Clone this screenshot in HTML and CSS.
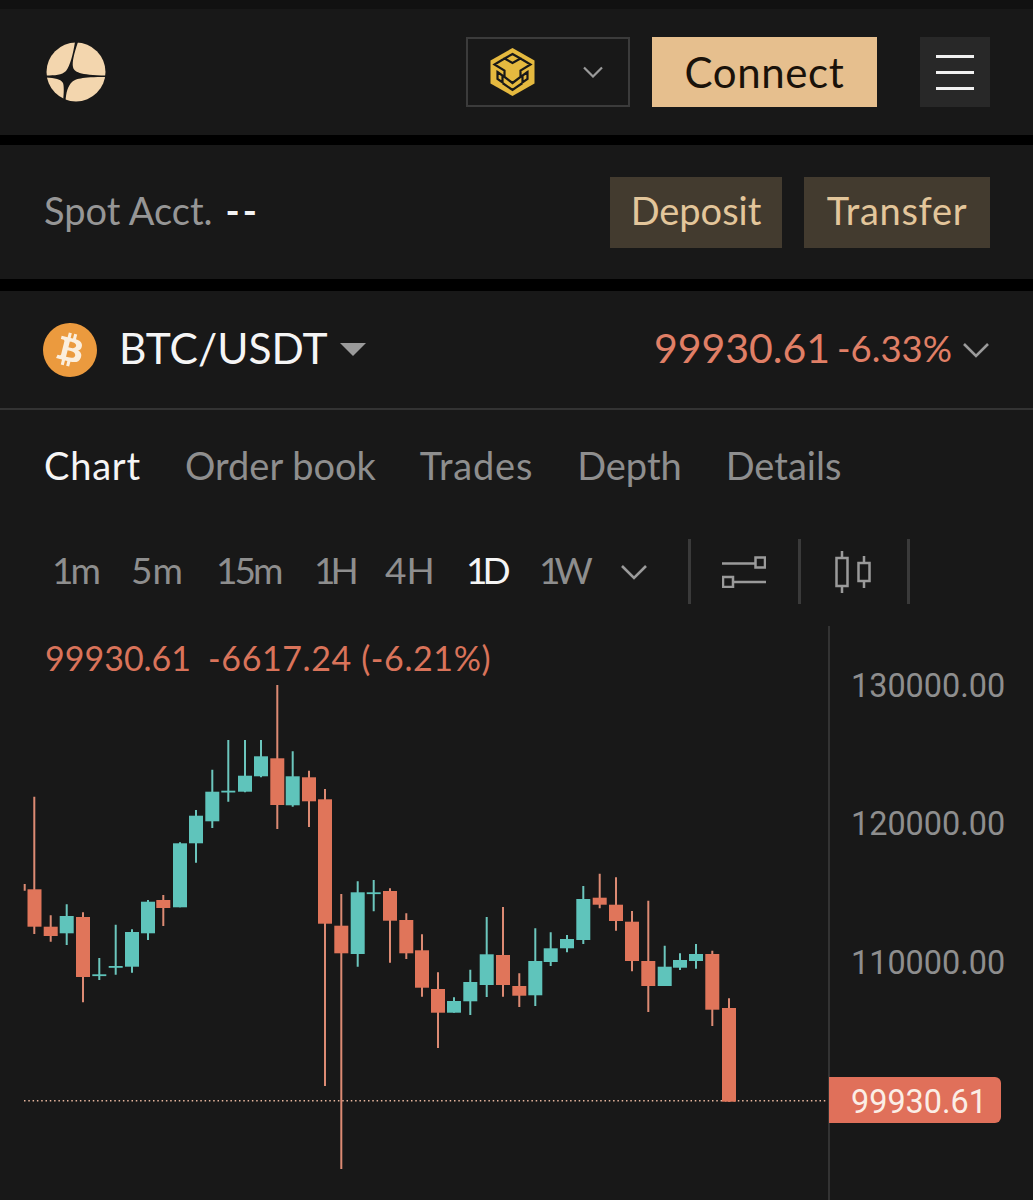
FILE: index.html
```html
<!DOCTYPE html>
<html lang="en">
<head>
    <meta charset="UTF-8">
    <meta name="viewport" content="width=device-width, initial-scale=1.0">
    <title>BTC/USDT</title>
    <link rel="stylesheet" href="styles.css">
</head>
<body>
    <header class="topbar">
        <svg class="logo" viewBox="0 0 60 60" aria-hidden="true">
            <circle cx="30" cy="30" r="29.5" fill="#f3d6ae"/>
            <path d="M32 0C28 12 26 20 27 25C28 30 33 33 60 33.5V35C35 35 29 37 26 40C22 44 20 50 19.5 60L17 59C18 50 18 44 17 41C15 37 9 36 0 35.5V33.5C9 33.5 16 33 20 29C24 24 27 12 29 0Z" fill="#181818"/>
        </svg>
        <div class="topbar-actions">
            <div class="network">
                <svg class="bnb" viewBox="0 0 44 48" aria-hidden="true">
                    <path d="M22 0L44 12.5V35.5L22 48L0 35.5V12.5Z" fill="#e5b93f"/>
                    <path d="M22 6L30 10.5L22 15L14 10.5ZM14 10.5L4 16.5L14 22.5V29L22 35L30 29V22.5L40 16.5L30 10.5M7 24L12 27.5V34.5L7 31ZM37 24L32 27.5V34.5L37 31ZM12 35L22 42L32 35" fill="none" stroke="#181818" stroke-width="2.2"/>
                </svg>
                <svg class="chevron-sm" viewBox="0 0 22 12" aria-hidden="true"><path d="M2 1.5L11 10.5L20 1.5"/></svg>
            </div>
            <button class="btn-connect" type="button">Connect</button>
            <button class="btn-menu" type="button" aria-label="Menu"><span></span><span></span><span></span></button>
        </div>
    </header>

    <section class="account">
        <div class="account-label">Spot Acct.<span class="account-value">--</span></div>
        <div class="account-actions">
            <button class="btn-soft btn-deposit" type="button">Deposit</button>
            <button class="btn-soft btn-transfer" type="button">Transfer</button>
        </div>
    </section>

    <main class="market">
        <div class="pair-row">
            <div class="pair">
                <svg class="coin" viewBox="0 0 24 24" aria-hidden="true">
                    <circle cx="12" cy="12" r="11" fill="#fbeedd"/>
                    <path fill="#eb9a3e" fill-rule="evenodd" d="M23.638 14.904c-1.602 6.43-8.113 10.34-14.542 8.736C2.67 22.05-1.244 15.525.362 9.105 1.962 2.67 8.475-1.243 14.9.358c6.43 1.605 10.342 8.115 8.738 14.548v-.002zm-6.35-4.613c.24-1.59-.974-2.45-2.64-3.03l.54-2.153-1.315-.33-.525 2.107c-.345-.087-.705-.167-1.064-.25l.526-2.127-1.32-.33-.54 2.165c-.285-.067-.565-.132-.84-.2l-1.815-.45-.35 1.407s.975.225.955.236c.535.136.63.486.615.766l-1.477 5.92c-.075.166-.24.406-.614.314.015.02-.96-.24-.96-.24l-.66 1.51 1.71.426.93.242-.54 2.19 1.32.327.54-2.17c.36.1.705.19 1.05.273l-.51 2.154 1.32.33.545-2.19c2.24.427 3.93.257 4.64-1.774.57-1.637-.03-2.58-1.217-3.196.854-.193 1.5-.76 1.68-1.93h.01zm-3.01 4.22c-.404 1.64-3.157.75-4.05.53l.72-2.9c.896.23 3.757.67 3.33 2.37zm.41-4.24c-.37 1.49-2.662.735-3.405.55l.654-2.64c.744.18 3.137.524 2.75 2.084v.006z"/>
                </svg>
                <span class="pair-name">BTC/USDT</span>
                <span class="pair-caret"></span>
            </div>
            <div class="ticker">
                <span class="ticker-price">99930.61</span>
                <span class="ticker-change">-6.33%</span>
                <svg class="chevron-md" viewBox="0 0 28 16" aria-hidden="true"><path d="M2 2L14 14L26 2"/></svg>
            </div>
        </div>

        <nav class="tabs">
            <a class="tab tab-wide active">Chart</a>
            <a class="tab">Order book</a>
            <a class="tab tab-wide">Trades</a>
            <a class="tab">Depth</a>
            <a class="tab">Details</a>
        </nav>

        <div class="intervals">
            <a class="interval i-1m">1m</a>
            <a class="interval i-5m">5m</a>
            <a class="interval i-15m">15m</a>
            <a class="interval i-1h">1H</a>
            <a class="interval i-4h">4H</a>
            <a class="interval active i-1d">1D</a>
            <a class="interval i-1w">1W</a>
            <svg class="chevron-md more" viewBox="0 0 28 16" aria-hidden="true"><path d="M2 2L14 14L26 2"/></svg>
            <span class="divider"></span>
            <svg class="tool tool-settings" viewBox="0 0 44 32" aria-hidden="true">
                <path d="M0 7.5H33M33.5 1.5H43V11.5H33.5ZM11 26H44M1 21H11V31H1Z"/>
            </svg>
            <span class="divider"></span>
            <svg class="tool tool-candles" viewBox="0 0 36 42" aria-hidden="true">
                <path d="M7 0V7M7 35V42M1.5 7H12.5V35H1.5ZM29 5V12M29 30V37M23.5 12H34.5V30H23.5Z"/>
            </svg>
            <span class="divider"></span>
        </div>

        <div class="chart">
            <div class="chart-legend">
                <span>99930.61</span>
                <span class="legend-change">-6617.24 (-6.21%)</span>
            </div>
            <svg class="candles" viewBox="0 0 829 574" aria-hidden="true">
                <g transform="translate(0 -626)">
                    <line class="dots" x1="24" y1="1100.7" x2="829" y2="1100.7"/>
                    <g class="down">
                        <path d="M24.7 884V890.7M34.3 796.7V934M50.7 915.3V941.7M83 912.3V1002.3M163.3 895V926M277.3 685V829M309 770.7V827M325 789V1086M341.3 894V1169M390 888.3V962.7M406.3 913.3V959M422 934.3V996.7M438 972.3V1048M503 907V996.7M519.3 973.3V1007M599.7 873.7V908.3M616 877.3V930.7M632 911V971.3M648.3 900.7V1012M712.3 950.7V1026M729 998.3V1101.7"/>
                        <rect x="27.5" y="889.3" width="14" height="37.4"/>
                        <rect x="43.7" y="926.7" width="14" height="9.3"/>
                        <rect x="76" y="917" width="14" height="60"/>
                        <rect x="156.3" y="900" width="14" height="8"/>
                        <rect x="270.3" y="758.3" width="14" height="46.7"/>
                        <rect x="302" y="777.3" width="14" height="24"/>
                        <rect x="318" y="799.3" width="14" height="124.4"/>
                        <rect x="334.3" y="925.7" width="14" height="27.6"/>
                        <rect x="383" y="891" width="14" height="29.7"/>
                        <rect x="399.3" y="920" width="14" height="33.3"/>
                        <rect x="415" y="950.3" width="14" height="37.4"/>
                        <rect x="431" y="989" width="14" height="23.7"/>
                        <rect x="496" y="955" width="14" height="30"/>
                        <rect x="512.3" y="986" width="14" height="9.7"/>
                        <rect x="592.7" y="897.7" width="14" height="7"/>
                        <rect x="609" y="904.7" width="14" height="16.3"/>
                        <rect x="625" y="921.7" width="14" height="39.3"/>
                        <rect x="641.3" y="961" width="14" height="25"/>
                        <rect x="705.3" y="954" width="14" height="55.7"/>
                        <rect x="722" y="1008" width="14" height="93.7"/>
                    </g>
                    <g class="up">
                        <path d="M66.7 904.3V945M99.3 958V980M115.7 924.7V974.7M132 929.3V972.7M148 900V940M180 842.3V907.3M196 810V862.7M212.3 769.7V828M228.3 740V801.7M245 740V792.3M261 740V777.3M292.7 751.3V806.7M357.7 881.3V966.7M373.7 880V911.3M454 997.3V1012.7M470.3 969.7V1015M486.7 917V997M535.3 928.3V1006M550.7 932.3V966M567 935V952.3M583.3 886V944M664.7 945.7V986M680 953.3V970M696 944V968.7"/>
                        <rect x="59.7" y="916" width="14" height="17.3"/>
                        <rect x="92.3" y="974.3" width="14" height="1.8"/>
                        <rect x="108.7" y="966" width="14" height="1.8"/>
                        <rect x="125" y="932" width="14" height="34.7"/>
                        <rect x="141" y="901.7" width="14" height="31.6"/>
                        <rect x="173" y="843.3" width="14" height="64"/>
                        <rect x="189" y="815.7" width="14" height="27.6"/>
                        <rect x="205.3" y="791.7" width="14" height="29.6"/>
                        <rect x="221.3" y="790.7" width="14" height="1.8"/>
                        <rect x="238" y="775.7" width="14" height="16"/>
                        <rect x="254" y="756.3" width="14" height="20"/>
                        <rect x="285.7" y="776.3" width="14" height="29"/>
                        <rect x="350.7" y="892.3" width="14" height="61.7"/>
                        <rect x="366.7" y="892.3" width="14" height="1.8"/>
                        <rect x="447" y="1001" width="14" height="11.7"/>
                        <rect x="463.3" y="982" width="14" height="19.3"/>
                        <rect x="479.7" y="954.3" width="14" height="30.7"/>
                        <rect x="528.3" y="961" width="14" height="34.3"/>
                        <rect x="543.7" y="948.3" width="14" height="13.7"/>
                        <rect x="560" y="939" width="14" height="9.3"/>
                        <rect x="576.3" y="899" width="14" height="41"/>
                        <rect x="657.7" y="966.7" width="14" height="19.3"/>
                        <rect x="673" y="960" width="14" height="7.7"/>
                        <rect x="689" y="954" width="14" height="7"/>
                    </g>
                </g>
            </svg>
            <div class="axis">
                <span class="axis-label y-130">130000.00</span>
                <span class="axis-label y-120">120000.00</span>
                <span class="axis-label y-110">110000.00</span>
                <span class="price-tag">99930.61</span>
            </div>
        </div>
    </main>
</body>
</html>
```

FILE: styles.css
```css
* {
    box-sizing: border-box;
}

html, body {
    margin: 0;
    height: 1200px;
    overflow: hidden;
}

body {
    font-family: 'Lato', 'Noto Sans', sans-serif;
    background-color: #000;
    color: #9a9a9a;
    padding-top: 9px;
    background-image: linear-gradient(#111 9px, transparent 9px);
}

button {
    font-family: inherit;
    border: none;
    padding: 0;
}

/* Header */
.topbar {
    height: 126px;
    background-color: #181818;
    display: flex;
    align-items: center;
    justify-content: space-between;
    padding: 0 43px 0 46px;
}

.logo {
    width: 60px;
    height: 60px;
    margin-top: -1px;
}

.topbar-actions {
    display: flex;
    align-items: center;
}

.network {
    width: 164px;
    height: 70px;
    border: 2px solid #3b3b3b;
    display: flex;
    align-items: center;
    justify-content: space-between;
    padding: 0 24px 0 22px;
    margin-right: 22px;
}

.bnb {
    width: 45px;
    height: 48px;
}

.chevron-sm, .chevron-md {
    fill: none;
    stroke: #9a9a9a;
}

.chevron-sm {
    width: 22px;
    height: 12px;
    stroke-width: 2.2;
}

.chevron-md {
    width: 28px;
    height: 16px;
    stroke-width: 2.6;
}

.btn-connect {
    width: 225px;
    height: 70px;
    background-color: #e6bf8e;
    color: #1a120a;
    font-size: 42px;
    letter-spacing: 0.6px;
    margin-right: 43px;
}

.btn-menu {
    width: 70px;
    height: 70px;
    background-color: #282828;
    display: flex;
    flex-direction: column;
    align-items: center;
    justify-content: center;
    gap: 13px;
}

.btn-menu span {
    width: 38px;
    height: 3px;
    background-color: #f0f0f0;
}

/* Spot account */
.account {
    height: 134px;
    margin-top: 10px;
    background-color: #181818;
    display: flex;
    align-items: center;
    justify-content: space-between;
    padding: 0 43px 0 44px;
}

.account-label {
    font-size: 38px;
    color: #969696;
    padding-bottom: 4px;
}

.account-value {
    color: #f2f2f2;
    font-weight: 700;
    letter-spacing: 3px;
    margin-left: 13px;
}

.account-actions {
    display: flex;
    gap: 22px;
}

.btn-soft {
    height: 71px;
    padding-bottom: 4px;
    background-color: #433b2f;
    color: #e3c69b;
    font-size: 38px;
}

.btn-deposit {
    width: 172px;
}

.btn-transfer {
    width: 186px;
    letter-spacing: 0.7px;
}

/* Market */
.market {
    margin-top: 12px;
    height: 909px;
    background-color: #181818;
}

.pair-row {
    height: 119px;
    border-bottom: 2px solid #333;
    display: flex;
    align-items: center;
    justify-content: space-between;
    padding: 0 43px;
}

.pair {
    display: flex;
    align-items: center;
}

.coin {
    width: 54px;
    height: 54px;
    margin-right: 22px;
}

.pair-name {
    font-size: 42.5px;
    color: #f5f5f5;
    margin-top: -4px;
}

.pair-caret {
    width: 0;
    height: 0;
    margin-left: 12px;
    border-left: 13px solid transparent;
    border-right: 13px solid transparent;
    border-top: 13px solid #9a9a9a;
}

.ticker {
    display: flex;
    align-items: center;
    color: #e07f66;
}

.ticker-price {
    font-size: 41px;
    margin-top: -4px;
}

.ticker-change {
    font-size: 36.5px;
    margin: -4px 0 0 7px;
}

.ticker .chevron-md {
    margin-left: 10px;
}

.tabs {
    display: flex;
    gap: 44px;
    padding: 31px 0 0 44px;
    font-size: 38px;
    line-height: 48px;
}

.tab {
    color: #8e8e8e;
}

.tab-wide {
    letter-spacing: 0.8px;
}

.tab.active {
    color: #f5f5f5;
}

.intervals {
    display: flex;
    align-items: center;
    gap: 34px;
    height: 65px;
    margin-top: 50px;
    padding-left: 52px;
    font-size: 37px;
}

.interval {
    color: #8e8e8e;
    white-space: nowrap;
    padding-bottom: 4px;
}

.interval.active {
    color: #f5f5f5;
}

.i-1m {
    width: 45px;
    letter-spacing: -3px;
}

.i-5m {
    width: 51px;
}

.i-15m {
    width: 64px;
    letter-spacing: -3px;
}

.i-1h {
    width: 37px;
    letter-spacing: -5px;
}

.i-4h {
    width: 47px;
}

.i-1d {
    width: 39px;
    letter-spacing: -5px;
}

.i-1w {
    width: 47px;
    letter-spacing: -6px;
}

.more {
    margin-left: 0;
}

.divider {
    width: 3px;
    height: 65px;
    background-color: #3a3a3a;
    margin-left: 6px;
}

.tool {
    fill: none;
    stroke: #9a9a9a;
    stroke-width: 2.5;
}

.tool-settings {
    width: 44px;
    height: 32px;
    margin-left: -3px;
}

.tool-settings + .divider {
    margin-left: -2px;
}

.tool-candles {
    width: 36px;
    height: 42px;
    margin-left: 0;
}

.tool-candles + .divider {
    margin-left: 2px;
}

/* Chart */
.chart {
    position: relative;
    height: 574px;
    margin-top: 22px;
}

.candles {
    display: block;
    width: 829px;
    height: 574px;
}

.dots {
    stroke: #e8b79f;
    stroke-width: 1.5;
    stroke-dasharray: 1.5 2.8;
}

.down path {
    fill: none;
    stroke: #dc8a73;
    stroke-width: 2;
}

.down rect {
    fill: #e0755a;
}

.up path {
    fill: none;
    stroke: #6cc6bd;
    stroke-width: 2;
}

.up rect {
    fill: #5fc4bb;
}

.chart-legend {
    position: absolute;
    top: 9px;
    left: 45px;
    display: flex;
    gap: 17px;
    font-size: 34px;
    line-height: 46px;
    color: #d9735a;
}

.legend-change {
    letter-spacing: 0.6px;
}

.axis {
    position: absolute;
    top: 0;
    bottom: 0;
    left: 828px;
    right: 0;
    border-left: 2px solid #333;
    font-family: 'Roboto', sans-serif;
    font-size: 32.4px;
    color: #8e8e8e;
}

.axis-label {
    position: absolute;
    left: 21px;
    line-height: 40px;
}

.y-130 {
    top: 40px;
}

.y-120 {
    top: 178px;
}

.y-110 {
    top: 317px;
}

.price-tag {
    position: absolute;
    top: 451px;
    left: -1px;
    width: 172px;
    height: 46px;
    padding-left: 22px;
    line-height: 50px;
    background-color: #e0705a;
    color: #fbeee6;
    border-radius: 0 6px 6px 0;
}
```
